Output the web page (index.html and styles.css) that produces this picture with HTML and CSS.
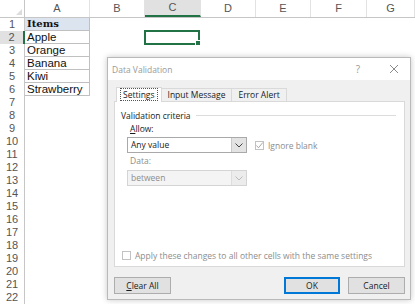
FILE: index.html
```html
<!DOCTYPE html>
<html>
<head>
    <meta charset="utf-8">
    <title>Data Validation</title>
    <link rel="stylesheet" href="styles.css">
</head>
<body>
<div class="screen">
    <div class="sheet">
        <div class="row head">
            <div class="rh corner"><span class="tri"></span></div>
            <div class="ch col-a">A</div>
            <div class="ch col-b">B</div>
            <div class="ch col-c sel">C</div>
            <div class="ch col-d">D</div>
            <div class="ch col-e">E</div>
            <div class="ch col-f">F</div>
            <div class="ch col-g">G</div>
        </div>
        <div class="row"><div class="rh">1</div><div class="cell col-a list first items">Items</div></div>
        <div class="row">
            <div class="rh sel">2</div><div class="cell col-a list">Apple</div>
            <div class="cell col-b"></div><div class="cell col-c active"><span class="handle"></span></div>
        </div>
        <div class="row"><div class="rh">3</div><div class="cell col-a list">Orange</div></div>
        <div class="row"><div class="rh">4</div><div class="cell col-a list">Banana</div></div>
        <div class="row"><div class="rh">5</div><div class="cell col-a list">Kiwi</div></div>
        <div class="row"><div class="rh">6</div><div class="cell col-a list">Strawberry</div></div>
        <div class="row"><div class="rh">7</div></div>
        <div class="row"><div class="rh">8</div></div>
        <div class="row"><div class="rh">9</div></div>
        <div class="row"><div class="rh">10</div></div>
        <div class="row"><div class="rh">11</div></div>
        <div class="row"><div class="rh">12</div></div>
        <div class="row"><div class="rh">13</div></div>
        <div class="row"><div class="rh">14</div></div>
        <div class="row"><div class="rh">15</div></div>
        <div class="row"><div class="rh">16</div></div>
        <div class="row"><div class="rh">17</div></div>
        <div class="row"><div class="rh">18</div></div>
        <div class="row"><div class="rh">19</div></div>
        <div class="row"><div class="rh">20</div></div>
        <div class="row"><div class="rh">21</div></div>
        <div class="row"><div class="rh">22</div></div>
    </div>

    <div class="dialog">
        <div class="titlebar">
            <span class="title">Data Validation</span>
            <span class="help">?</span>
            <span class="close">
                <svg width="10" height="10" viewBox="0 0 10 10"><path d="M1 1L9 9M9 1L1 9" stroke="#8a8a8a" stroke-width="1" fill="none"/></svg>
            </span>
        </div>
        <div class="tabs">
            <div class="tab active"><span class="focus">Settings</span></div>
            <div class="tab">Input Message</div>
            <div class="tab">Error Alert</div>
        </div>
        <div class="panel">
            <div class="group"><span>Validation criteria</span><span class="rule"></span></div>
            <div class="fields">
                <div class="label"><u>A</u>llow:</div>
                <div class="line">
                    <div class="select">
                        <span class="value">Any value</span>
                        <span class="arrow"><svg width="8" height="5" viewBox="0 0 8 5"><path d="M0.5 0.5L4 4L7.5 0.5" stroke="#444" fill="none"/></svg></span>
                    </div>
                    <div class="check muted">
                        <span class="box"><svg width="9" height="9" viewBox="0 0 9 9"><path d="M1.5 4.5L3.5 6.8L7.8 1.5" stroke="#a8a8a8" fill="none"/></svg></span>
                        <span>Ignore blank</span>
                    </div>
                </div>
                <div class="label muted">Data:</div>
                <div class="select disabled">
                    <span class="value">between</span>
                    <span class="arrow"><svg width="8" height="5" viewBox="0 0 8 5"><path d="M0.5 0.5L4 4L7.5 0.5" stroke="#bbb" fill="none"/></svg></span>
                </div>
            </div>
            <div class="check muted apply">
                <span class="box"></span>
                <span>Apply these changes to all other cells with the same settings</span>
            </div>
        </div>
        <div class="buttons">
            <div class="btn"><u>C</u>lear All</div>
            <div class="grow"></div>
            <div class="btn default">OK</div>
            <div class="btn">Cancel</div>
        </div>
    </div>
</div>
</body>
</html>
```

FILE: styles.css
```css
body {
    margin: 0;
    background: #ffffff;
}

.screen {
    position: relative;
    width: 415px;
    height: 304px;
    overflow: hidden;
    font-family: "Liberation Sans", Arial, sans-serif;
}

/* sheet */
.row {
    display: flex;
    height: 13px;
}

.row.head {
    height: 18px;
    border-bottom: 1px solid #c6c6c6;
    box-sizing: border-box;
}

.rh {
    width: 25px;
    flex: none;
    box-sizing: border-box;
    border-right: 1px solid #c6c6c6;
    color: #555;
    font-size: 11px;
    line-height: 13px;
    text-align: center;
}

.rh.sel {
    background: #e1e1e1;
    border-right: 2px solid #217346;
}

.rh.corner {
    position: relative;
}

.tri {
    position: absolute;
    right: 2px;
    bottom: 2px;
    border-left: 6px solid transparent;
    border-bottom: 6px solid #dcdcdc;
}

.ch {
    flex: none;
    box-sizing: border-box;
    border-right: 1px solid #e2e2e2;
    color: #555;
    font-size: 11px;
    line-height: 17px;
    text-align: center;
}

.ch.sel {
    background: #e1e1e1;
    border-bottom: 2px solid #217346;
    line-height: 15px;
}

.col-a { width: 65px; }
.col-b { width: 55px; }
.col-c { width: 56px; }
.col-d { width: 55px; }
.col-e { width: 55px; }
.col-f { width: 56px; }
.col-g { width: 48px; }

.cell {
    flex: none;
    box-sizing: border-box;
    font-size: 11.5px;
    line-height: 12px;
    color: #111;
    padding-left: 2px;
}

.cell.list {
    border-right: 1px solid #c0c0c0;
    border-bottom: 1px solid #c0c0c0;
}

.cell.items {
    background: #dce4ef;
    font-family: "DejaVu Serif", serif;
    font-weight: bold;
    font-size: 10px;
}

.cell.active {
    position: relative;
    margin-left: -1px;
    margin-top: -1px;
    height: 15px;
    border: 2px solid #217346;
}

.handle {
    position: absolute;
    right: -3px;
    bottom: -3px;
    width: 4px;
    height: 4px;
    background: #217346;
    border: 1px solid #fff;
}

/* dialog */
.dialog {
    position: absolute;
    left: 107px;
    top: 57px;
    width: 304px;
    height: 243px;
    box-sizing: border-box;
    border: 1px solid #b9b9b9;
    background: #f0f0f0;
    box-shadow: 0 0 6px rgba(0, 0, 0, 0.22);
    display: flex;
    flex-direction: column;
    font-family: "Open Sans", "Noto Sans", sans-serif;
    font-size: 8.5px;
    color: #1a1a1a;
}

.titlebar {
    display: flex;
    align-items: center;
    height: 22px;
    background: #ffffff;
    padding-left: 4px;
    color: #9a9a9a;
    font-size: 8.5px;
}

.title {
    flex: 1;
}

.help {
    width: 12px;
    text-align: center;
    margin-right: 25px;
    font-size: 10px;
}

.close {
    display: flex;
    margin-right: 11px;
}

.tabs {
    display: flex;
    align-items: flex-end;
    height: 21px;
    padding-left: 8px;
}

.tab {
    height: 12px;
    line-height: 11px;
    padding: 0 6px;
    border: 1px solid #d9d9d9;
    border-bottom: none;
    background: #f0f0f0;
}

.tab + .tab {
    border-left: none;
}

.tab.active {
    position: relative;
    z-index: 1;
    height: 14px;
    margin-bottom: -1px;
    background: #ffffff;
    padding: 0 3px;
    line-height: 13px;
}

.focus {
    border: 1px dotted #555;
    padding: 0 2px;
}

.panel {
    margin-left: 6px;
    width: 291px;
    height: 166px;
    box-sizing: border-box;
    border: 1px solid #d9d9d9;
    background: #ffffff;
    display: flex;
    flex-direction: column;
    padding: 7px 8px 5px 6px;
}

.group {
    display: flex;
    align-items: center;
    height: 12px;
}

.rule {
    flex: 1;
    height: 1px;
    background: #dcdcdc;
    margin-left: 5px;
}

.fields {
    padding-left: 6px;
}

.label {
    margin-top: 2px;
    padding-left: 3px;
    height: 12px;
    line-height: 12px;
}

.label.muted,
.check.muted {
    color: #8d8d8d;
}

.line {
    display: flex;
    align-items: center;
    margin-top: 2px;
}

.select {
    display: flex;
    width: 120px;
    height: 16px;
    box-sizing: border-box;
    border: 1px solid #a9a9a9;
    background: #ffffff;
}

.select .value {
    flex: 1;
    padding-left: 3px;
    line-height: 14px;
}

.arrow {
    width: 14px;
    display: flex;
    align-items: center;
    justify-content: center;
    background: #e3e3e3;
    border-left: 1px solid #c9c9c9;
}

.select.disabled {
    margin-top: 3px;
    background: #f4f4f4;
    border-color: #d4d4d4;
    color: #8d8d8d;
}

.select.disabled .arrow {
    background: #ececec;
    border-left-color: #dddddd;
}

.check {
    display: flex;
    align-items: center;
    margin-left: 8px;
}

.box {
    width: 9px;
    height: 9px;
    box-sizing: border-box;
    border: 1px solid #c2c2c2;
    background: #ffffff;
    margin-right: 4px;
    display: flex;
}

.box svg {
    margin: -1px;
}

.check.apply {
    margin-top: auto;
    margin-left: 1px;
}

.buttons {
    display: flex;
    padding: 10px 5px 0 6px;
    gap: 8px;
}

.grow {
    flex: 1;
}

.btn {
    width: 57px;
    height: 17px;
    box-sizing: border-box;
    border: 1px solid #adadad;
    background: #e1e1e1;
    text-align: center;
    line-height: 15px;
    color: #1a1a1a;
}

.btn.default {
    width: 56px;
    border: 2px solid #0078d7;
    line-height: 13px;
}
```
